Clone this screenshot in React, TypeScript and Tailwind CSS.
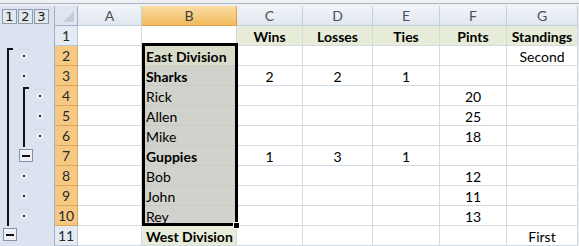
import React from 'react';

type Row = {
  n: number;
  b?: string;
  c?: string;
  d?: string;
  e?: string;
  f?: string;
  g?: string;
  bold?: boolean;
};

const rows: Row[] = [
  { n: 1, c: 'Wins', d: 'Losses', e: 'Ties', f: 'Pints', g: 'Standings' },
  { n: 2, b: 'East Division', g: 'Second', bold: true },
  { n: 3, b: 'Sharks', c: '2', d: '2', e: '1', bold: true },
  { n: 4, b: 'Rick', f: '20' },
  { n: 5, b: 'Allen', f: '25' },
  { n: 6, b: 'Mike', f: '18' },
  { n: 7, b: 'Guppies', c: '1', d: '3', e: '1', bold: true },
  { n: 8, b: 'Bob', f: '12' },
  { n: 9, b: 'John', f: '11' },
  { n: 10, b: 'Rey', f: '13' },
  { n: 11, b: 'West Division', g: 'First', bold: true },
];

const colHeads = ['A', 'B', 'C', 'D', 'E', 'F', 'G'];

const cell = 'border-r border-b border-[#d4dae4] h-[20px] text-[14px] leading-[18px] pt-[2px] text-black whitespace-nowrap overflow-hidden';

// outline symbols drawn in the gutter, from row 1 down
const OutlineMarks: React.FC = () => {
  const dot = (x: number, y: number) => (
    <g key={`${x}-${y}`}>
      <circle cx={x + 1} cy={y + 1} r={3.5} fill="#e9eef6" />
      <rect x={x} y={y} width={2} height={2} fill="#2a2a2a" />
    </g>
  );
  return (
    <svg width={55} height={220} className="block">
      {/* level 1 bracket */}
      <rect x={7} y={22} width={6} height={2} fill="#111" />
      <rect x={7} y={22} width={2} height={178} fill="#111" />
      <rect x={3.5} y={202.5} width={13} height={12} fill="#eef1f5" stroke="#8593a6" />
      <rect x={6} y={208} width={8} height={2} fill="#111" />
      {/* level 2 bracket */}
      <rect x={23} y={61} width={6} height={2} fill="#111" />
      <rect x={23} y={61} width={2} height={60} fill="#111" />
      <rect x={19.5} y={123.5} width={13} height={12} fill="#eef1f5" stroke="#8593a6" />
      <rect x={22} y={129} width={8} height={2} fill="#111" />
      {[30, 50, 150, 170, 190].map((y) => dot(23, y - 1))}
      {[70, 90, 110].map((y) => dot(39, y - 1))}
    </svg>
  );
};

export default function App() {
  return (
    <div className="relative w-[579px] h-[246px] overflow-hidden bg-[#e9edf2] font-['Lato','Open_Sans',sans-serif]">
      {/* top strip */}
      <div className="h-[6px] bg-[#eef0f3] pt-[3px]">
        <div className="h-[1px] bg-[#a9b5c5]" />
      </div>

      <div className="flex">
        {/* outline gutter */}
        <div className="w-[55px] bg-[#dae3ef] border-r border-[#9fb1c7] flex flex-col">
          <div className="h-[20px] flex gap-[1px] pt-[3px] pl-[2px]">
            {['1', '2', '3'].map((l) => (
              <div
                key={l}
                className="w-[15px] h-[15px] bg-[#e4e8ee] border border-[#8d9bad] flex items-center justify-center text-[13px] leading-none text-[#1d1d1d] font-['DejaVu_Sans',sans-serif]"
              >
                {l}
              </div>
            ))}
          </div>
          <OutlineMarks />
        </div>

        {/* sheet */}
        <div className="grid grid-cols-[23px_64px_95px_66px_70px_67px_67px_71px] bg-white">
          {/* corner */}
          <div className="h-[20px] bg-[#dfe6f0] border-r border-b border-[#9fb1c7] flex items-end justify-end pr-[3px] pb-[3px]">
            <svg width={11} height={11}>
              <polygon points="11,0 11,11 0,11" fill="#c3cddb" />
            </svg>
          </div>
          {colHeads.map((h) => (
            <div
              key={h}
              className={
                h === 'B'
                  ? 'h-[20px] bg-linear-to-b from-[#fadca3] to-[#f2bb5c] border-r border-b border-[#d9a24c] text-center text-[14px] leading-[19px] text-[#3c3c3c]'
                  : 'h-[20px] bg-linear-to-b from-[#f1f4f9] to-[#e1e7ef] border-r border-b border-[#c5cfdc] text-center text-[14px] leading-[19px] text-[#4a4f57]'
              }
            >
              {h}
            </div>
          ))}

          {rows.map((r) => {
            const sel = r.n >= 2 && r.n <= 10;
            const top = r.n === 1;
            const mid = `${cell} text-center ${top ? 'bg-[#e6ecd7] font-bold' : ''}`;
            let bCls = `${cell} pl-[4px] ${r.bold ? 'font-bold' : ''}`;
            if (r.n === 2) bCls += ' bg-[#d8dcc8] border-b-[#cfd2c2]';
            else if (sel) bCls += ' bg-[#d1d2cb] border-b-[#c9cac3]';
            else if (r.n === 11) bCls += ' bg-[#e6ecd7]';
            return (
              <React.Fragment key={r.n}>
                <div
                  className={
                    sel
                      ? 'h-[20px] bg-[#f7c882] border-r border-b border-[#dca75c] text-center text-[14px] leading-[19px] text-[#2a2a2a]'
                      : 'h-[20px] bg-[#e4ebf5] border-r border-b border-[#b9c6d7] text-center text-[14px] leading-[19px] text-[#2a2a2a]'
                  }
                >
                  {r.n}
                </div>
                <div className={cell} />
                <div className={bCls}>{r.b}</div>
                <div className={mid}>{r.c}</div>
                <div className={mid}>{r.d}</div>
                <div className={mid}>{r.e}</div>
                <div className={mid}>{r.f}</div>
                <div className={mid}>{r.g}</div>
              </React.Fragment>
            );
          })}
        </div>
      </div>

      {/* selection frame over B2:B10 */}
      <div className="absolute left-[142px] top-[43px] w-[96px] h-[183px] border-[3px] border-black pointer-events-none" />
      <div className="absolute left-[233px] top-[222px] w-[7px] h-[7px] bg-black border border-white" />
    </div>
  );
}
